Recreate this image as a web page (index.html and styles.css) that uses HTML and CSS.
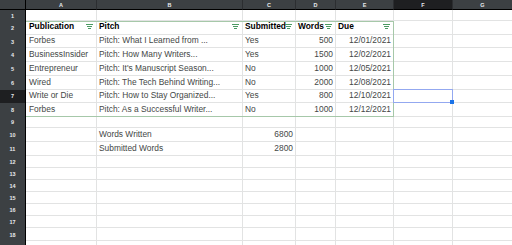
FILE: index.html
```html
<!DOCTYPE html>
<html>
<head>
<meta charset="utf-8">
<link rel="stylesheet" href="styles.css">
</head>
<body>
<div class="stack">
<div class="sheet">
  <div class="corner"></div>
  <div class="ch">A</div><div class="ch">B</div><div class="ch">C</div><div class="ch">D</div><div class="ch">E</div><div class="ch sel">F</div><div class="ch">G</div>

  <div class="rh">1</div><div class="c"></div><div class="c"></div><div class="c"></div><div class="c"></div><div class="c"></div><div class="c"></div><div class="c"></div>

  <div class="rh">2</div>
  <div class="c hd"><span>Publication</span><i class="flt"></i></div>
  <div class="c hd"><span>Pitch</span><i class="flt"></i></div>
  <div class="c hd"><span>Submitted</span><i class="flt"></i></div>
  <div class="c hd"><span>Words</span><i class="flt"></i></div>
  <div class="c hd"><span>Due</span><i class="flt"></i></div>
  <div class="c"></div><div class="c"></div>

  <div class="rh">3</div><div class="c">Forbes</div><div class="c">Pitch: What I Learned from ...</div><div class="c">Yes</div><div class="c n">500</div><div class="c n">12/01/2021</div><div class="c"></div><div class="c"></div>
  <div class="rh">4</div><div class="c">BusinessInsider</div><div class="c">Pitch: How Many Writers...</div><div class="c">Yes</div><div class="c n">1500</div><div class="c n">12/02/2021</div><div class="c"></div><div class="c"></div>
  <div class="rh">5</div><div class="c">Entrepreneur</div><div class="c">Pitch: It's Manuscript Season...</div><div class="c">No</div><div class="c n">1000</div><div class="c n">12/05/2021</div><div class="c"></div><div class="c"></div>
  <div class="rh">6</div><div class="c">Wired</div><div class="c">Pitch: The Tech Behind Writing...</div><div class="c">No</div><div class="c n">2000</div><div class="c n">12/08/2021</div><div class="c"></div><div class="c"></div>
  <div class="rh sel">7</div><div class="c">Write or Die</div><div class="c">Pitch: How to Stay Organized...</div><div class="c">Yes</div><div class="c n">800</div><div class="c n">12/10/2021</div><div class="c"></div><div class="c"></div>
  <div class="rh">8</div><div class="c">Forbes</div><div class="c">Pitch: As a Successful Writer...</div><div class="c">No</div><div class="c n">1000</div><div class="c n">12/12/2021</div><div class="c"></div><div class="c"></div>

  <div class="rh">9</div><div class="c"></div><div class="c"></div><div class="c"></div><div class="c"></div><div class="c"></div><div class="c"></div><div class="c"></div>
  <div class="rh">10</div><div class="c"></div><div class="c">Words Written</div><div class="c n">6800</div><div class="c"></div><div class="c"></div><div class="c"></div><div class="c"></div>
  <div class="rh">11</div><div class="c"></div><div class="c">Submitted Words</div><div class="c n">2800</div><div class="c"></div><div class="c"></div><div class="c"></div><div class="c"></div>
  <div class="rh">12</div><div class="c"></div><div class="c"></div><div class="c"></div><div class="c"></div><div class="c"></div><div class="c"></div><div class="c"></div>
  <div class="rh">13</div><div class="c"></div><div class="c"></div><div class="c"></div><div class="c"></div><div class="c"></div><div class="c"></div><div class="c"></div>
  <div class="rh">14</div><div class="c"></div><div class="c"></div><div class="c"></div><div class="c"></div><div class="c"></div><div class="c"></div><div class="c"></div>
  <div class="rh">15</div><div class="c"></div><div class="c"></div><div class="c"></div><div class="c"></div><div class="c"></div><div class="c"></div><div class="c"></div>
  <div class="rh">16</div><div class="c"></div><div class="c"></div><div class="c"></div><div class="c"></div><div class="c"></div><div class="c"></div><div class="c"></div>
  <div class="rh">17</div><div class="c"></div><div class="c"></div><div class="c"></div><div class="c"></div><div class="c"></div><div class="c"></div><div class="c"></div>
  <div class="rh">18</div><div class="c"></div><div class="c"></div><div class="c"></div><div class="c"></div><div class="c"></div><div class="c"></div><div class="c"></div>
  <div class="rh">19</div><div class="c"></div><div class="c"></div><div class="c"></div><div class="c"></div><div class="c"></div><div class="c"></div><div class="c"></div>
</div>
<div class="sheet overlay">
  <div class="filter-range"></div>
  <div class="selection"></div>
</div>
</div>
</body>
</html>
```

FILE: styles.css
```css
html, body {
  margin: 0;
  padding: 0;
  background: #ffffff;
  overflow: hidden;
}

.stack {
  display: grid;
  width: 513px;
}

.stack > .sheet {
  grid-area: 1 / 1;
}

.sheet {
  display: grid;
  grid-template-columns: 26px 71px 146px 53px 40px 58px 59px 60px;
  grid-template-rows: 10px 11px repeat(7, 13.714px) 11px 14px 14px repeat(8, 12.1px);
  font-family: "Liberation Sans", Arial, sans-serif;
  font-size: 8.4px;
  color: #444746;
}

.overlay {
  pointer-events: none;
}

.corner {
  background: #3c4043;
  border-right: 1px solid #000;
  border-bottom: 1px solid #000;
  box-sizing: border-box;
}

.ch {
  background: #3c4043;
  color: #e8eaed;
  font-size: 5.5px;
  font-weight: bold;
  display: flex;
  align-items: center;
  justify-content: center;
  border-right: 1px solid #2c2e31;
  border-bottom: 1px solid #000;
  box-sizing: border-box;
}

.ch.sel {
  background: #1e1f21;
}

.rh {
  background: #3c4043;
  color: #e8eaed;
  font-size: 5.5px;
  font-weight: bold;
  display: flex;
  align-items: center;
  justify-content: center;
  border-right: 1px solid #000;
  box-sizing: border-box;
}

.rh.sel {
  background: #1e1f21;
}

.c {
  border-right: 1px solid #e2e3e3;
  border-bottom: 1px solid #e2e3e3;
  box-sizing: border-box;
  display: flex;
  align-items: flex-end;
  padding: 0 2px 1px 2px;
  white-space: nowrap;
  overflow: hidden;
  line-height: 11px;
}

.c:nth-child(8n+2) {
  padding-left: 3px;
}

.c.n {
  justify-content: flex-end;
}

.c.hd {
  font-weight: bold;
  color: #000;
  justify-content: space-between;
  align-items: center;
  padding-right: 3px;
  overflow: visible;
}

.flt {
  display: block;
  width: 7px;
  height: 5px;
  flex: none;
  margin-left: -4px;
  background:
    linear-gradient(#4a9a62, #4a9a62) 0 0 / 7px 1px no-repeat,
    linear-gradient(#4a9a62, #4a9a62) 1px 2px / 5px 1px no-repeat,
    linear-gradient(#4a9a62, #4a9a62) 2px 4px / 3px 1px no-repeat;
}

.filter-range {
  grid-column: 2 / 7;
  grid-row: 3 / 10;
  border: 1px solid #a6c8a9;
  border-left: none;
}

.selection {
  grid-column: 7 / 8;
  grid-row: 8 / 9;
  border: 1px solid #93a8f0;
  position: relative;
  margin: -1px 0 0 -1px;
}

.selection::after {
  content: "";
  position: absolute;
  right: -2px;
  bottom: -2px;
  width: 4px;
  height: 4px;
  background: #1a73e8;
}
```
